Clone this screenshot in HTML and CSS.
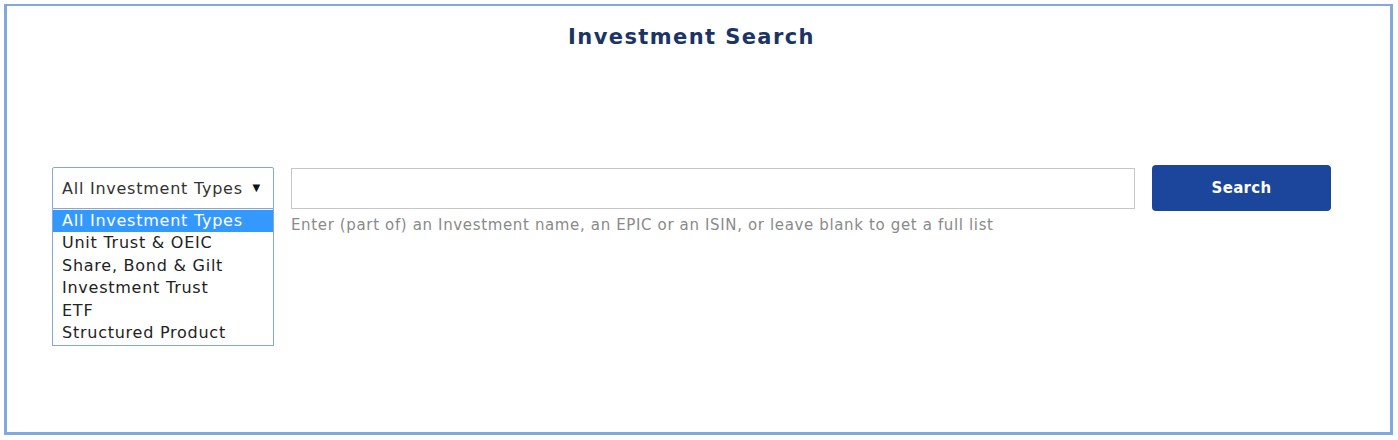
FILE: index.html
```html
<!DOCTYPE html>
<html>
<head>
<meta charset="utf-8">
<link rel="stylesheet" href="styles.css">
</head>
<body>
<div class="frame">
  <div class="content">
    <h1 class="title">Investment Search</h1>
    <div class="search-row">
      <div class="type-select">
        <div class="select-box">
          <span class="select-value">All Investment Types</span>
          <span class="select-arrow">&#9660;</span>
        </div>
        <ul class="select-list">
          <li class="option selected">All Investment Types</li>
          <li class="option">Unit Trust &amp; OEIC</li>
          <li class="option">Share, Bond &amp; Gilt</li>
          <li class="option">Investment Trust</li>
          <li class="option">ETF</li>
          <li class="option">Structured Product</li>
        </ul>
      </div>
      <div class="query">
        <div class="query-input"></div>
        <div class="hint">Enter (part of) an Investment name, an EPIC or an ISIN, or leave blank to get a full list</div>
      </div>
      <button class="search-btn">Search</button>
    </div>
  </div>
</div>
</body>
</html>
```
FILE: styles.css
```css
html, body {
  margin: 0;
  padding: 0;
  background: #ffffff;
}
body {
  font-family: "DejaVu Sans", Verdana, sans-serif;
}
.frame {
  margin: 4px 5px 5px 4px;
  border: 3px solid #7fa9e0;
  border-top-width: 2px;
  box-sizing: border-box;
  height: 431px;
  background: #fff;
}
.content {
  padding: 0 59px 0 45px;
}
.title {
  margin: 0;
  padding-top: 16px;
  text-align: center;
  font-size: 21px;
  letter-spacing: 1.4px;
  font-weight: bold;
  color: #1b3466;
  line-height: 30px;
}
.search-row {
  display: flex;
  align-items: flex-start;
  margin-top: 113px;
}
.type-select {
  width: 222px;
  flex: none;
  margin-top: 2px;
}
.select-box {
  box-sizing: border-box;
  height: 42px;
  border: 1px solid #84a7dc;
  border-radius: 2px 2px 0 0;
  display: flex;
  align-items: center;
  justify-content: space-between;
  padding: 0 12px 0 9px;
  font-size: 16px;
  letter-spacing: 0.75px;
  color: #333;
}
.select-arrow {
  font-size: 10px;
  color: #111;
  margin-top: -2px;
}
.select-list {
  list-style: none;
  margin: 0;
  padding: 1px 0 1px;
  border: 1px solid #84a7dc;
  border-top: none;
}
.option {
  height: 22.4px;
  line-height: 22px;
  padding-left: 9px;
  font-size: 16px;
  letter-spacing: 0.75px;
  color: #222;
}
.option.selected {
  background: #3399ff;
  color: #fff;
}
.query {
  flex: 1;
  margin-left: 17px;
  margin-top: 3px;
}
.query-input {
  box-sizing: border-box;
  height: 41px;
  border: 1px solid #c6c6c6;
}
.hint {
  margin-top: 7px;
  font-size: 15px;
  letter-spacing: 0.64px;
  color: #8a8a8a;
}
.search-btn {
  flex: none;
  width: 179px;
  height: 46px;
  margin-left: 17px;
  background: #1b469b;
  border: none;
  border-radius: 4px;
  color: #fff;
  font-family: "DejaVu Sans", Verdana, sans-serif;
  font-weight: bold;
  font-size: 15px;
  letter-spacing: 0.3px;
}
```
